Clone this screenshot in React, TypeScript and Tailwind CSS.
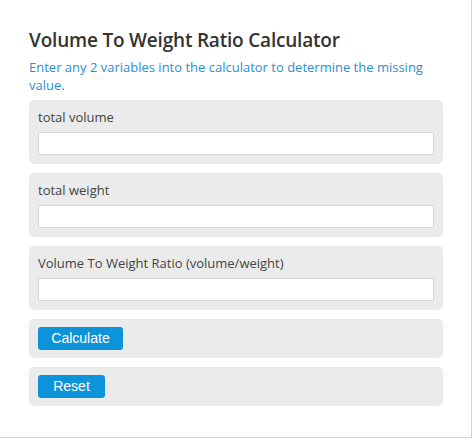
import React from "react";

const font = { fontFamily: '"Open Sans", "Noto Sans", sans-serif' };

function Field({ label }: { label: string }) {
  return (
    <div className="rounded-[5px] bg-[#ebebeb] px-[9px] pt-[8px] pb-[9px]">
      <div className="text-[13px] leading-[18px] text-[#444]">{label}</div>
      <div className="mt-[6px] h-[23px] border border-[#d6d6d6] bg-white" />
    </div>
  );
}

function ButtonRow({ label, w }: { label: string; w: string }) {
  return (
    <div className="rounded-[5px] bg-[#ebebeb] px-[9px] py-[8px]">
      <button
        className={`${w} block h-[23px] rounded-[3px] bg-[#0d93d9] text-[14px] leading-[23px] text-white`}
        style={{ fontFamily: '"Liberation Sans", Arial, sans-serif' }}
      >
        {label}
      </button>
    </div>
  );
}

export default function App() {
  return (
    <div className="h-[445px] w-[474px] bg-white" style={font}>
      <div className="h-[438px] w-[472px] border-r border-b border-[#d4d4d4] pl-[29px] pr-[28px] pt-[26px]">
        <h1 className="text-[19px] font-semibold leading-[28px] tracking-[-0.2px] text-[#333]">
          Volume To Weight Ratio Calculator
        </h1>
        <p className="mt-[4px] pr-[10px] text-[13px] leading-[18px] text-[#2a8fd0]">
          Enter any 2 variables into the calculator to determine the missing value.
        </p>
        <div className="mt-[6px] flex flex-col gap-[9px]">
          <Field label="total volume" />
          <Field label="total weight" />
          <Field label="Volume To Weight Ratio (volume/weight)" />
          <ButtonRow label="Calculate" w="w-[85px]" />
          <ButtonRow label="Reset" w="w-[67px]" />
        </div>
      </div>
    </div>
  );
}
